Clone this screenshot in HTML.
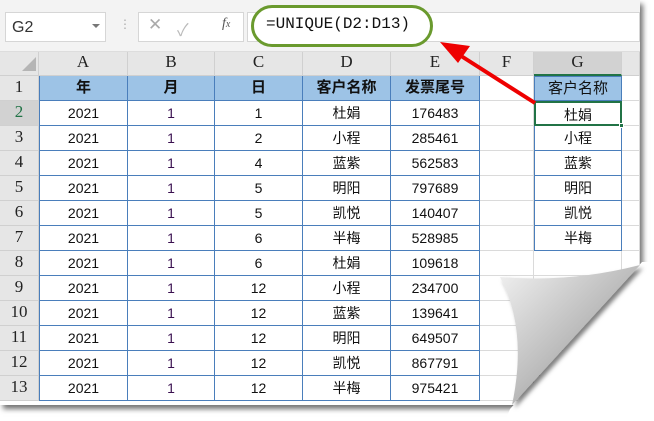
<!DOCTYPE html>
<html><head><meta charset="utf-8"><style>
body{margin:0;width:654px;height:421px;background:#fff;position:relative;overflow:hidden;font-family:"Liberation Sans","Noto Sans CJK SC",sans-serif}
.a{position:absolute;box-sizing:border-box}
.hd{background:#e6e6e6;color:#222;font-family:"Liberation Serif",serif;font-size:17px;text-align:center;border-right:1px solid #d0d0d0;border-bottom:1px solid #d0d0d0}
.c{font-size:14px;text-align:center;color:#111}
</style></head><body>
<div class="a" style="left:0;top:0;width:640px;height:405px;background:#fff;box-shadow:3px 4px 5px rgba(0,0,0,.55)"></div>
<div class="a" style="left:0;top:0;width:640px;height:52px;background:#f3f3f3;border-bottom:1px solid #ddd"></div>
<div class="a" style="left:5px;top:12px;width:101px;height:30px;background:#fff;border:1px solid #d6d6d6;font-size:16px;padding:6px 0 0 6px;color:#333">G2</div>
<div class="a" style="left:92px;top:24px;width:0;height:0;border-left:4px solid transparent;border-right:4px solid transparent;border-top:4px solid #777"></div>
<div class="a" style="left:119px;top:17px;color:#aaa;font-size:12px">⋮</div>
<div class="a" style="left:138px;top:12px;width:106px;height:30px;background:#fff;border:1px solid #d6d6d6"></div>
<div class="a" style="left:148px;top:15px;color:#aaa;font-size:17px">✕</div>
<div class="a" style="left:177px;top:16px;color:#bbb;font-size:17px">✓</div>
<div class="a" style="left:222px;top:16px;color:#555;font-size:14px;font-style:italic;font-family:'Liberation Serif',serif">f<span style="font-size:10px">x</span></div>
<div class="a" style="left:247px;top:12px;width:393px;height:30px;background:#fff;border:1px solid #d6d6d6"></div>
<div class="a" style="left:251px;top:5px;width:182px;height:42px;border:3px solid #6a9a2e;border-radius:21px;background:#fff"></div>
<div class="a" style="left:266px;top:15px;font-family:'Liberation Mono',monospace;font-size:16px;color:#111">=UNIQUE(D2:D13)</div>

<div class="a hd" style="left:0;top:52px;width:39px;height:24px"></div>
<div class="a" style="left:22px;top:57px;width:0;height:0;border-left:14px solid transparent;border-bottom:14px solid #b5b5b5"></div>
<div class="a hd" style="left:39px;top:52px;width:89px;height:24px">A</div>
<div class="a hd" style="left:128px;top:52px;width:87px;height:24px">B</div>
<div class="a hd" style="left:215px;top:52px;width:88px;height:24px">C</div>
<div class="a hd" style="left:303px;top:52px;width:88px;height:24px">D</div>
<div class="a hd" style="left:391px;top:52px;width:89px;height:24px">E</div>
<div class="a hd" style="left:480px;top:52px;width:54px;height:24px">F</div>
<div class="a hd" style="left:534px;top:52px;width:88px;height:24px;background:#d2d2d2;border-bottom:2px solid #217346">G</div>
<div class="a hd" style="left:622px;top:52px;width:18px;height:24px"></div>

<div id="g"></div>
<script>
var h='',cols=[39,128,215,303,391,480,534,622,640];
var D=[["年","月","日","客户名称","发票尾号"],
["2021",1,1,"杜娟",176483],["2021",1,2,"小程",285461],["2021",1,4,"蓝紫",562583],["2021",1,5,"明阳",797689],["2021",1,5,"凯悦",140407],["2021",1,6,"半梅",528985],["2021",1,6,"杜娟",109618],["2021",1,12,"小程",234700],["2021",1,12,"蓝紫",139641],["2021",1,12,"明阳",649507],["2021",1,12,"凯悦",867791],["2021",1,12,"半梅",975421]];
var G=["客户名称","杜娟","小程","蓝紫","明阳","凯悦","半梅"];
for(var r=0;r<13;r++){var t=76+25*r;
h+='<div class="a hd" style="left:0;top:'+t+'px;width:39px;height:25px;padding-top:1px;'+(r==1?'background:#d2d2d2;color:#217346;':'')+'">'+(r+1)+'</div>';
for(var c=0;c<8;c++){var l=cols[c],w=cols[c+1]-l;var s='left:'+l+'px;top:'+t+'px;width:'+w+'px;height:25px;line-height:24px;';
if(c<5){s+='border-right:1px solid #4a7ebb;border-bottom:1px solid #4a7ebb;'+(c==0?'border-left:1px solid #4a7ebb;':'');if(r==0)s+='background:#9dc3e6;font-weight:bold;font-size:15px;';
var col=(c==1)&&r>0?'color:#3a1050;':'';
h+='<div class="a c" style="'+s+col+'">'+D[r][c]+'</div>';}
else if(c==6&&r<7){s+='border:1px solid #4a7ebb;border-top:'+(r==0?'1px solid #4a7ebb':'0')+';';if(r==0)s+='background:#9dc3e6;font-size:15px;';
if(r==1)s+='border:2px solid #217346;';
h+='<div class="a c" style="'+s+'">'+G[r]+'</div>';}
else{h+='<div class="a" style="'+s+'border-right:1px solid #dadada;border-bottom:1px solid #dadada"></div>';}
}}
h+='<div class="a" style="left:619px;top:123px;width:5px;height:5px;background:#217346;border:1px solid #fff"></div>';
document.getElementById('g').innerHTML=h;
</script>
<div class="a" style="left:0;top:401px;width:640px;height:4px;background:#fff"></div>
<svg class="a" style="left:0;top:0" width="654" height="421">
<defs><linearGradient id="cg" x1="0" y1="0" x2="1" y2="1"><stop offset="0" stop-color="#f2f2f2"/><stop offset=".5" stop-color="#bdbdbd"/><stop offset="1" stop-color="#7a7a7a"/></linearGradient>
<filter id="sh"><feDropShadow dx="3" dy="3" stdDeviation="2" flood-opacity=".5"/></filter></defs>
<polygon points="642,262 654,262 654,421 505,421 510,409" fill="#fff"/>
<path d="M500,277 Q570,283 640,265 L512,405 Q528,330 500,277Z" fill="url(#cg)" filter="url(#sh)"/>
<path d="M535,103 L458,54" stroke="#e00" stroke-width="4"/>
<polygon points="440,42 470,46 458,63" fill="#e00"/>
</svg>
</body></html>
